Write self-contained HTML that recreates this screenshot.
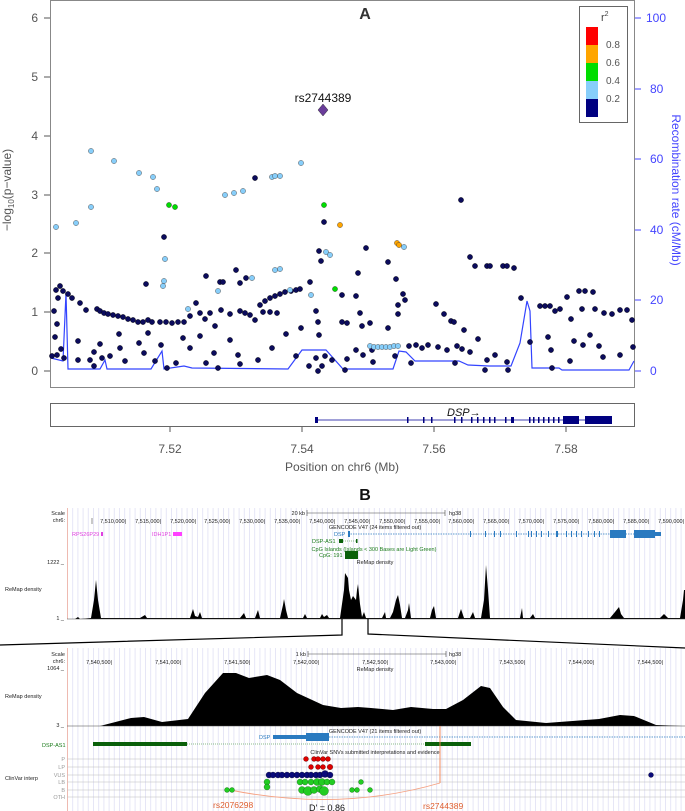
<!DOCTYPE html>
<html><head><meta charset="utf-8"><style>
html,body{margin:0;padding:0;background:#fff;}
svg{display:block;font-family:"Liberation Sans",sans-serif;}
</style></head><body>
<svg width="685" height="811" viewBox="0 0 685 811" xmlns="http://www.w3.org/2000/svg">
<defs>
<pattern id="grid" x="67" y="0" width="5.2" height="10" patternUnits="userSpaceOnUse">
<line x1="0.5" y1="0" x2="0.5" y2="10" stroke="#dcdcf2" stroke-width="0.7"/>
</pattern>
</defs>
<!-- PANEL A -->
<rect x="50.5" y="0.5" width="584" height="387" fill="none" stroke="#888" stroke-width="1"/>
<text x="365" y="19" font-size="16" font-weight="bold" fill="#333" text-anchor="middle">A</text>
<g font-size="12" fill="#555" text-anchor="end">
<text x="38" y="22">6</text><text x="38" y="81">5</text><text x="38" y="140">4</text>
<text x="38" y="199">3</text><text x="38" y="257">2</text><text x="38" y="316">1</text><text x="38" y="375">0</text>
</g>
<g stroke="#555" stroke-width="1">
<line x1="44" y1="18" x2="50" y2="18"/><line x1="44" y1="77" x2="50" y2="77"/><line x1="44" y1="136" x2="50" y2="136"/>
<line x1="44" y1="195" x2="50" y2="195"/><line x1="44" y1="253" x2="50" y2="253"/><line x1="44" y1="312" x2="50" y2="312"/><line x1="44" y1="371" x2="50" y2="371"/>
</g>
<text transform="translate(11,190) rotate(-90)" font-size="12" fill="#555" text-anchor="middle">−log<tspan font-size="8" dy="3">10</tspan><tspan dy="-3">(p−value)</tspan></text>
<g stroke="#4444ff" stroke-width="1">
<line x1="635" y1="18" x2="641" y2="18"/><line x1="635" y1="89" x2="641" y2="89"/><line x1="635" y1="159" x2="641" y2="159"/>
<line x1="635" y1="230" x2="641" y2="230"/><line x1="635" y1="300" x2="641" y2="300"/><line x1="635" y1="371" x2="641" y2="371"/>
</g>
<g font-size="12" fill="#4444ff">
<text x="646" y="22">100</text><text x="650" y="93">80</text><text x="650" y="163">60</text>
<text x="650" y="234">40</text><text x="650" y="304">20</text><text x="650" y="375">0</text>
</g>
<text transform="translate(672,190) rotate(90)" font-size="12" fill="#4444ff" text-anchor="middle">Recombination rate (cM/Mb)</text>
<!-- recombination line -->
<polyline fill="none" stroke="#3344ff" stroke-width="1.2" points="51,358 63,361 66,293 68,369 100,369 105,360 107,369 151,369 162,351 164,369 184,366 192,368 288,369 302,350 326,350 343,369 358,369 393,369 399,351 406,352 415,361 459,361 468,365 489,366 511,366 520,343 527,301 530,311 532,368 559,368 562,370 629,370 634,361"/>
<!-- navy points -->
<g fill="#0b0b5c" stroke="#000" stroke-width="0.4">
<circle cx="255" cy="178" r="2.6"/><circle cx="461" cy="200" r="2.6"/><circle cx="164" cy="237" r="2.6"/><circle cx="324" cy="222" r="2.6"/>
<circle cx="366" cy="248" r="2.6"/><circle cx="388" cy="262" r="2.6"/><circle cx="319" cy="251" r="2.6"/><circle cx="321" cy="261" r="2.6"/>
<circle cx="470" cy="257" r="2.6"/><circle cx="475" cy="266" r="2.6"/><circle cx="487" cy="266" r="2.6"/><circle cx="490" cy="266" r="2.6"/><circle cx="503" cy="266" r="2.6"/><circle cx="507" cy="266" r="2.6"/><circle cx="514" cy="268" r="2.6"/>
<circle cx="358" cy="273" r="2.6"/><circle cx="396" cy="279" r="2.6"/><circle cx="206" cy="276" r="2.6"/><circle cx="220" cy="282" r="2.6"/><circle cx="223" cy="282" r="2.6"/>
<circle cx="236" cy="270" r="2.6"/><circle cx="240" cy="283" r="2.6"/><circle cx="246" cy="278" r="2.6"/><circle cx="310" cy="282" r="2.6"/><circle cx="146" cy="284" r="2.6"/>
<circle cx="342" cy="295" r="2.6"/><circle cx="356" cy="296" r="2.6"/><circle cx="403" cy="294" r="2.6"/><circle cx="405" cy="300" r="2.6"/>
<circle cx="521" cy="298" r="2.6"/><circle cx="567" cy="297" r="2.6"/><circle cx="579" cy="291" r="2.6"/><circle cx="585" cy="291" r="2.6"/><circle cx="593" cy="292" r="2.6"/>
<circle cx="296" cy="290" r="2.6"/><circle cx="300" cy="289" r="2.6"/><circle cx="291" cy="291" r="2.6"/><circle cx="285" cy="292" r="2.6"/><circle cx="280" cy="294" r="2.6"/><circle cx="275" cy="296" r="2.6"/><circle cx="270" cy="298" r="2.6"/><circle cx="265" cy="301" r="2.6"/><circle cx="260" cy="305" r="2.6"/>
<circle cx="56" cy="290" r="2.6"/><circle cx="60" cy="286" r="2.6"/><circle cx="63" cy="291" r="2.6"/><circle cx="68" cy="294" r="2.6"/><circle cx="72" cy="298" r="2.6"/><circle cx="58" cy="298" r="2.6"/><circle cx="54" cy="311" r="2.6"/><circle cx="57" cy="324" r="2.6"/>
<circle cx="80" cy="303" r="2.6"/><circle cx="86" cy="310" r="2.6"/><circle cx="97" cy="309" r="2.6"/><circle cx="100" cy="311" r="2.6"/><circle cx="104" cy="313" r="2.6"/><circle cx="108" cy="314" r="2.6"/><circle cx="113" cy="315" r="2.6"/><circle cx="118" cy="316" r="2.6"/><circle cx="123" cy="317" r="2.6"/><circle cx="128" cy="319" r="2.6"/><circle cx="133" cy="320" r="2.6"/><circle cx="138" cy="322" r="2.6"/><circle cx="143" cy="322" r="2.6"/><circle cx="148" cy="320" r="2.6"/><circle cx="152" cy="322" r="2.6"/>
<circle cx="160" cy="322" r="2.6"/><circle cx="166" cy="322" r="2.6"/><circle cx="172" cy="323" r="2.6"/><circle cx="178" cy="322" r="2.6"/><circle cx="184" cy="322" r="2.6"/><circle cx="190" cy="316" r="2.6"/><circle cx="196" cy="303" r="2.6"/><circle cx="200" cy="313" r="2.6"/><circle cx="205" cy="319" r="2.6"/><circle cx="210" cy="313" r="2.6"/><circle cx="215" cy="326" r="2.6"/><circle cx="221" cy="310" r="2.6"/><circle cx="230" cy="314" r="2.6"/>
<circle cx="240" cy="311" r="2.6"/><circle cx="245" cy="313" r="2.6"/><circle cx="250" cy="315" r="2.6"/><circle cx="255" cy="320" r="2.6"/><circle cx="263" cy="312" r="2.6"/><circle cx="270" cy="312" r="2.6"/><circle cx="277" cy="313" r="2.6"/><circle cx="286" cy="334" r="2.6"/><circle cx="301" cy="328" r="2.6"/><circle cx="316" cy="311" r="2.6"/><circle cx="318" cy="322" r="2.6"/><circle cx="319" cy="335" r="2.6"/>
<circle cx="342" cy="322" r="2.6"/><circle cx="347" cy="323" r="2.6"/><circle cx="360" cy="313" r="2.6"/><circle cx="362" cy="326" r="2.6"/><circle cx="370" cy="323" r="2.6"/><circle cx="388" cy="328" r="2.6"/><circle cx="398" cy="314" r="2.6"/><circle cx="398" cy="305" r="2.6"/>
<circle cx="436" cy="304" r="2.6"/><circle cx="444" cy="314" r="2.6"/><circle cx="451" cy="321" r="2.6"/><circle cx="454" cy="322" r="2.6"/><circle cx="464" cy="330" r="2.6"/>
<circle cx="540" cy="306" r="2.6"/><circle cx="545" cy="306" r="2.6"/><circle cx="550" cy="306" r="2.6"/><circle cx="555" cy="311" r="2.6"/><circle cx="560" cy="309" r="2.6"/><circle cx="571" cy="319" r="2.6"/><circle cx="582" cy="309" r="2.6"/><circle cx="595" cy="309" r="2.6"/><circle cx="604" cy="313" r="2.6"/><circle cx="612" cy="314" r="2.6"/><circle cx="620" cy="310" r="2.6"/><circle cx="627" cy="310" r="2.6"/><circle cx="632" cy="320" r="2.6"/>
<circle cx="55" cy="337" r="2.6"/><circle cx="52" cy="356" r="2.6"/><circle cx="57" cy="355" r="2.6"/><circle cx="61" cy="349" r="2.6"/><circle cx="64" cy="358" r="2.6"/><circle cx="78" cy="341" r="2.6"/><circle cx="78" cy="360" r="2.6"/><circle cx="90" cy="360" r="2.6"/><circle cx="94" cy="352" r="2.6"/><circle cx="94" cy="366" r="2.6"/><circle cx="100" cy="344" r="2.6"/><circle cx="102" cy="358" r="2.6"/><circle cx="110" cy="356" r="2.6"/><circle cx="119" cy="334" r="2.6"/><circle cx="120" cy="348" r="2.6"/><circle cx="125" cy="361" r="2.6"/>
<circle cx="139" cy="343" r="2.6"/><circle cx="144" cy="353" r="2.6"/><circle cx="148" cy="333" r="2.6"/><circle cx="155" cy="361" r="2.6"/><circle cx="161" cy="345" r="2.6"/><circle cx="167" cy="368" r="2.6"/><circle cx="176" cy="363" r="2.6"/><circle cx="183" cy="338" r="2.6"/><circle cx="190" cy="348" r="2.6"/><circle cx="200" cy="336" r="2.6"/><circle cx="206" cy="363" r="2.6"/><circle cx="214" cy="353" r="2.6"/><circle cx="218" cy="368" r="2.6"/><circle cx="230" cy="340" r="2.6"/><circle cx="238" cy="355" r="2.6"/><circle cx="240" cy="364" r="2.6"/>
<circle cx="258" cy="360" r="2.6"/><circle cx="272" cy="348" r="2.6"/><circle cx="296" cy="356" r="2.6"/><circle cx="309" cy="366" r="2.6"/><circle cx="316" cy="358" r="2.6"/><circle cx="318" cy="371" r="2.6"/><circle cx="322" cy="366" r="2.6"/><circle cx="325" cy="356" r="2.6"/><circle cx="332" cy="360" r="2.6"/><circle cx="345" cy="370" r="2.6"/><circle cx="347" cy="359" r="2.6"/><circle cx="356" cy="350" r="2.6"/><circle cx="363" cy="355" r="2.6"/><circle cx="372" cy="350" r="2.6"/><circle cx="373" cy="362" r="2.6"/>
<circle cx="395" cy="356" r="2.6"/><circle cx="409" cy="346" r="2.6"/><circle cx="411" cy="363" r="2.6"/><circle cx="416" cy="345" r="2.6"/><circle cx="422" cy="348" r="2.6"/><circle cx="428" cy="345" r="2.6"/><circle cx="438" cy="347" r="2.6"/><circle cx="447" cy="350" r="2.6"/><circle cx="455" cy="363" r="2.6"/><circle cx="457" cy="346" r="2.6"/><circle cx="462" cy="349" r="2.6"/><circle cx="470" cy="352" r="2.6"/><circle cx="478" cy="339" r="2.6"/><circle cx="485" cy="370" r="2.6"/><circle cx="487" cy="360" r="2.6"/><circle cx="495" cy="355" r="2.6"/><circle cx="507" cy="362" r="2.6"/><circle cx="508" cy="370" r="2.6"/>
<circle cx="530" cy="342" r="2.6"/><circle cx="548" cy="337" r="2.6"/><circle cx="551" cy="350" r="2.6"/><circle cx="552" cy="368" r="2.6"/><circle cx="570" cy="361" r="2.6"/><circle cx="574" cy="341" r="2.6"/><circle cx="583" cy="345" r="2.6"/><circle cx="590" cy="335" r="2.6"/><circle cx="599" cy="346" r="2.6"/><circle cx="603" cy="357" r="2.6"/><circle cx="620" cy="355" r="2.6"/><circle cx="633" cy="347" r="2.6"/>
</g>
<!-- light blue -->
<g fill="#87cefa" stroke="#333" stroke-width="0.4">
<circle cx="91" cy="151" r="2.6"/><circle cx="114" cy="161" r="2.6"/><circle cx="139" cy="173" r="2.6"/><circle cx="153" cy="177" r="2.6"/><circle cx="157" cy="189" r="2.6"/><circle cx="91" cy="207" r="2.6"/><circle cx="56" cy="227" r="2.6"/><circle cx="76" cy="223" r="2.6"/><circle cx="165" cy="259" r="2.6"/><circle cx="164" cy="281" r="2.6"/><circle cx="163" cy="286" r="2.6"/>
<circle cx="225" cy="195" r="2.6"/><circle cx="234" cy="193" r="2.6"/><circle cx="243" cy="191" r="2.6"/><circle cx="272" cy="177" r="2.6"/><circle cx="275" cy="176" r="2.6"/><circle cx="280" cy="176" r="2.6"/><circle cx="301" cy="163" r="2.6"/><circle cx="218" cy="291" r="2.6"/><circle cx="252" cy="278" r="2.6"/><circle cx="275" cy="270" r="2.6"/><circle cx="280" cy="269" r="2.6"/><circle cx="290" cy="290" r="2.6"/><circle cx="311" cy="295" r="2.6"/><circle cx="188" cy="309" r="2.6"/><circle cx="326" cy="252" r="2.6"/><circle cx="330" cy="255" r="2.6"/><circle cx="404" cy="247" r="2.6"/>
<circle cx="370" cy="346" r="2.6"/><circle cx="374" cy="347" r="2.6"/><circle cx="378" cy="347" r="2.6"/><circle cx="382" cy="347" r="2.6"/><circle cx="386" cy="347" r="2.6"/><circle cx="390" cy="347" r="2.6"/><circle cx="394" cy="346" r="2.6"/><circle cx="398" cy="346" r="2.6"/>
</g>
<g fill="#00dd00" stroke="#333" stroke-width="0.4">
<circle cx="169" cy="205" r="2.6"/><circle cx="175" cy="207" r="2.6"/><circle cx="324" cy="205" r="2.6"/><circle cx="335" cy="289" r="2.6"/>
</g>
<g fill="#ffa500" stroke="#333" stroke-width="0.4">
<circle cx="340" cy="225" r="2.6"/><circle cx="397" cy="243" r="2.6"/><circle cx="399" cy="245" r="2.6"/>
</g>
<polygon points="323,104 328,110 323,116 318,110" fill="#6a3d9a" stroke="#333" stroke-width="0.5"/>
<text x="323" y="102" font-size="12" fill="#111" text-anchor="middle">rs2744389</text>
<!-- legend -->
<rect x="579.5" y="6.5" width="48" height="116" fill="#fff" stroke="#666"/>
<text x="601" y="21" font-size="11" fill="#444">r<tspan font-size="7" dy="-5">2</tspan></text>
<rect x="586" y="27" width="12" height="18" fill="#ff0000"/><rect x="586" y="45" width="12" height="18" fill="#ffa500"/>
<rect x="586" y="63" width="12" height="18" fill="#00dd00"/><rect x="586" y="81" width="12" height="18" fill="#87cefa"/>
<rect x="586" y="99" width="12" height="18" fill="#000080"/>
<g font-size="10" fill="#555"><text x="606" y="48">0.8</text><text x="606" y="66">0.6</text><text x="606" y="84">0.4</text><text x="606" y="102">0.2</text></g>
<!-- gene box -->
<rect x="50.5" y="403.5" width="584" height="23" fill="#fff" stroke="#666"/>
<text x="447" y="416" font-size="11" font-style="italic" fill="#111">DSP→</text>
<line x1="316" y1="420" x2="612" y2="420" stroke="#4040b0" stroke-width="1"/>
<g fill="#000080">
<rect x="315" y="417" width="3" height="6"/>
<rect x="407" y="417" width="1.5" height="6"/><rect x="423" y="417" width="1.5" height="6"/><rect x="431" y="417" width="1.5" height="6"/><rect x="454" y="417" width="1.5" height="6"/><rect x="461" y="417" width="1.5" height="6"/><rect x="471" y="417" width="1.5" height="6"/><rect x="477" y="417" width="1.5" height="6"/><rect x="483" y="417" width="1.5" height="6"/><rect x="489" y="417" width="1.5" height="6"/><rect x="494" y="417" width="1.5" height="6"/><rect x="505" y="417" width="1.5" height="6"/><rect x="511" y="417" width="3" height="6"/><rect x="529" y="417" width="1.5" height="6"/><rect x="533" y="417" width="1.5" height="6"/><rect x="538" y="417" width="1.5" height="6"/><rect x="543" y="417" width="1.5" height="6"/><rect x="548" y="417" width="1.5" height="6"/><rect x="553" y="417" width="1.5" height="6"/><rect x="558" y="417" width="1.5" height="6"/>
<rect x="563" y="416" width="16" height="8"/><rect x="585" y="416" width="27" height="8"/>
</g>
<g stroke="#555"><line x1="170" y1="427" x2="170" y2="432"/><line x1="302" y1="427" x2="302" y2="432"/><line x1="434" y1="427" x2="434" y2="432"/><line x1="566" y1="427" x2="566" y2="432"/></g>
<g font-size="12" fill="#555" text-anchor="middle"><text x="170" y="453">7.52</text><text x="302" y="453">7.54</text><text x="434" y="453">7.56</text><text x="566" y="453">7.58</text>
<text x="342" y="471">Position on chr6 (Mb)</text></g>

<!-- PANEL B -->
<text x="365" y="500" font-size="16" font-weight="bold" fill="#111" text-anchor="middle">B</text>
<rect x="67" y="508" width="618" height="111" fill="url(#grid)"/>
<rect x="67" y="648" width="618" height="163" fill="url(#grid)"/>
<line x1="67.5" y1="508" x2="67.5" y2="619" stroke="#f0b0a0" stroke-width="0.8"/>
<line x1="67.5" y1="648" x2="67.5" y2="811" stroke="#f0b0a0" stroke-width="0.8"/>
<g font-size="5.5" fill="#222">
<text x="65" y="515" text-anchor="end">Scale</text><text x="65" y="522" text-anchor="end">chr6:</text>
<line x1="307" y1="513" x2="445" y2="513" stroke="#444" stroke-width="0.6"/><line x1="307" y1="510" x2="307" y2="516" stroke="#444" stroke-width="0.6"/><line x1="445" y1="510" x2="445" y2="516" stroke="#444" stroke-width="0.6"/>
<text x="305" y="515" text-anchor="end">20 kb</text><text x="449" y="515">hg38</text>
<line x1="92" y1="518" x2="92" y2="524" stroke="#222" stroke-width="0.5"/>
<text x="126" y="523" text-anchor="end">7,510,000|</text><text x="161" y="523" text-anchor="end">7,515,000|</text><text x="196" y="523" text-anchor="end">7,520,000|</text><text x="230" y="523" text-anchor="end">7,525,000|</text><text x="265" y="523" text-anchor="end">7,530,000|</text><text x="300" y="523" text-anchor="end">7,535,000|</text><text x="335" y="523" text-anchor="end">7,540,000|</text><text x="370" y="523" text-anchor="end">7,545,000|</text><text x="405" y="523" text-anchor="end">7,550,000|</text><text x="440" y="523" text-anchor="end">7,555,000|</text><text x="474" y="523" text-anchor="end">7,560,000|</text><text x="509" y="523" text-anchor="end">7,565,000|</text><text x="544" y="523" text-anchor="end">7,570,000|</text><text x="579" y="523" text-anchor="end">7,575,000|</text><text x="614" y="523" text-anchor="end">7,580,000|</text><text x="649" y="523" text-anchor="end">7,585,000|</text><text x="684" y="523" text-anchor="end">7,590,000|</text>
<text x="375" y="529" text-anchor="middle">GENCODE V47 (24 items filtered out)</text>
<text x="72" y="536" fill="#e040e0">RPS26P29</text><rect x="101" y="532" width="2" height="4" fill="#e040e0"/>
<text x="152" y="536" fill="#e040e0">IDH1P1</text><rect x="173" y="532" width="9" height="4" fill="#ff40ff"/>
<text x="334" y="536" fill="#2a7ac0">DSP</text>
<line x1="348" y1="534" x2="660" y2="534" stroke="#2a7ac0" stroke-width="0.8" stroke-dasharray="1.5,1"/>
<g fill="#2a7ac0"><rect x="348" y="531" width="2" height="6"/><rect x="470" y="531" width="1" height="6"/><rect x="485" y="531" width="1" height="6"/><rect x="494" y="531" width="1" height="6"/><rect x="500" y="531" width="1" height="6"/><rect x="516" y="531" width="1" height="6"/><rect x="528" y="531" width="1" height="6"/><rect x="531" y="531" width="1" height="6"/><rect x="536" y="531" width="1" height="6"/><rect x="541" y="531" width="1" height="6"/><rect x="548" y="531" width="1" height="6"/><rect x="556" y="531" width="2" height="6"/><rect x="566" y="531" width="1" height="6"/><rect x="571" y="531" width="1" height="6"/><rect x="576" y="531" width="1" height="6"/><rect x="581" y="531" width="1" height="6"/><rect x="588" y="531" width="1" height="6"/><rect x="594" y="531" width="1" height="6"/><rect x="599" y="531" width="1" height="6"/><rect x="610" y="530" width="16" height="8"/><rect x="634" y="530" width="21" height="8"/><rect x="655" y="532" width="6" height="4"/></g>
<text x="312" y="543" fill="#1a7a1a">DSP-AS1</text><rect x="339" y="539" width="4" height="4" fill="#0a600a"/><line x1="343" y1="541" x2="357" y2="541" stroke="#1a7a1a" stroke-width="0.6" stroke-dasharray="1,1"/><rect x="356" y="539" width="1.5" height="4" fill="#0a600a"/>
<text x="374" y="551" text-anchor="middle" fill="#1a7a1a">CpG Islands (Islands &lt; 300 Bases are Light Green)</text>
<text x="319" y="557" fill="#1a7a1a">CpG: 191</text><rect x="345" y="551" width="13" height="8" fill="#0a600a"/>
<text x="375" y="564" text-anchor="middle">ReMap density</text>
<text x="64" y="564" text-anchor="end">1222 _</text><text x="64" y="620" text-anchor="end">1 _</text>
<text x="5" y="591">ReMap density</text>
</g>
<!-- top density -->
<path fill="#000" d="M67,619 L75,619 L78,617 L80,619 L91,618 L94,600 L96,580 L98,600 L101,618 L140,618 L145,615 L147,618 L190,618 L193,609 L195,616 L198,617 L200,612 L202,618 L240,618 L244,613 L246,618 L255,618 L258,610 L260,618 L280,618 L283,605 L284,599 L286,610 L288,618 L303,618 L305,614 L307,618 L320,618 L322,614 L324,617 L327,615 L329,618 L340,618 L342,604 L344,590 L345,573 L348,578 L349,590 L351,600 L353,596 L356,600 L357,590 L358,584 L360,604 L362,617 L364,612 L366,618 L382,618 L385,612 L386,618 L390,618 L393,612 L396,600 L398,595 L400,605 L402,618 L405,618 L408,610 L409,603 L411,618 L430,618 L432,610 L434,606 L436,618 L458,618 L461,609 L464,618 L470,618 L473,612 L475,618 L481,618 L484,600 L486,565 L488,590 L490,618 L520,618 L522,608 L523,618 L530,618 L533,614 L535,618 L610,618 L615,612 L619,607 L621,614 L624,618 L660,618 L664,614 L668,618 L680,618 L683,600 L684,590 L685,590 L685,619 Z"/>
<line x1="67" y1="619" x2="685" y2="619" stroke="#444" stroke-width="0.6"/>
<!-- zoom lines -->
<polyline points="342,619 342,635 0,645" fill="none" stroke="#000" stroke-width="1.2"/>
<polyline points="368,619 368,634 685,648" fill="none" stroke="#000" stroke-width="1.2"/>
<!-- lower -->
<g font-size="5.5" fill="#222">
<text x="65" y="656" text-anchor="end">Scale</text><text x="65" y="663" text-anchor="end">chr6:</text>
<line x1="308" y1="654" x2="446" y2="654" stroke="#444" stroke-width="0.6"/><line x1="308" y1="651" x2="308" y2="657" stroke="#444" stroke-width="0.6"/><line x1="446" y1="651" x2="446" y2="657" stroke="#444" stroke-width="0.6"/>
<text x="306" y="656" text-anchor="end">1 kb</text><text x="449" y="656">hg38</text>
<text x="112" y="664" text-anchor="end">7,540,500|</text><text x="181" y="664" text-anchor="end">7,541,000|</text><text x="250" y="664" text-anchor="end">7,541,500|</text><text x="319" y="664" text-anchor="end">7,542,000|</text><text x="388" y="664" text-anchor="end">7,542,500|</text><text x="456" y="664" text-anchor="end">7,543,000|</text><text x="525" y="664" text-anchor="end">7,543,500|</text><text x="594" y="664" text-anchor="end">7,544,000|</text><text x="663" y="664" text-anchor="end">7,544,500|</text>
<text x="375" y="671" text-anchor="middle">ReMap density</text>
<text x="64" y="670" text-anchor="end">1064 _</text><text x="64" y="727" text-anchor="end">3 _</text>
<text x="5" y="698">ReMap density</text>
</g>
<path fill="#000" d="M100,726 L131,718 L144,717 L162,722 L188,719 L205,693 L223,673 L236,673 L249,678 L267,675 L280,680 L297,693 L323,705 L341,708 L358,707 L371,708 L393,710 L411,707 L433,709 L446,709 L463,700 L481,686 L490,688 L503,707 L516,720 L546,723 L599,719 L620,715 L634,716 L656,725 L682,726 Z"/>
<line x1="67" y1="726" x2="685" y2="726" stroke="#444" stroke-width="0.6"/>
<g font-size="5.5" fill="#222">
<text x="375" y="733" text-anchor="middle">GENCODE V47 (21 items filtered out)</text>
<text x="259" y="739" fill="#2a7ac0">DSP</text>
<rect x="273" y="735" width="33" height="4" fill="#2a7ac0"/><rect x="306" y="733" width="23" height="8" fill="#2a7ac0"/>
<line x1="329" y1="737" x2="685" y2="737" stroke="#2a7ac0" stroke-width="0.7" stroke-dasharray="1.5,1"/>
<text x="42" y="747" fill="#1a7a1a">DSP-AS1</text>
<rect x="93" y="742" width="94" height="4" fill="#0a600a"/><line x1="187" y1="744" x2="425" y2="744" stroke="#1a7a1a" stroke-width="0.6" stroke-dasharray="1,1"/><rect x="425" y="742" width="46" height="4" fill="#0a600a"/>
<text x="375" y="754" text-anchor="middle">ClinVar SNVs submitted interpretations and evidence</text>
<g fill="#999" text-anchor="end"><text x="65" y="761">P</text><text x="65" y="769">LP</text><text x="65" y="777">VUS</text><text x="65" y="784">LB</text><text x="65" y="792">B</text><text x="65" y="799">OTH</text></g>
<text x="5" y="780">ClinVar interp</text>
</g>
<g stroke="#bbb" stroke-width="0.6"><line x1="67" y1="759" x2="685" y2="759"/><line x1="67" y1="767" x2="685" y2="767"/><line x1="67" y1="775" x2="685" y2="775"/><line x1="67" y1="782" x2="685" y2="782"/><line x1="67" y1="790" x2="685" y2="790"/><line x1="67" y1="797" x2="685" y2="797"/></g>
<line x1="440" y1="726" x2="440" y2="783" stroke="#f08050" stroke-width="0.9"/>
<path d="M440,783 Q340,812 230,790" fill="none" stroke="#f5a080" stroke-width="0.9"/>
<g stroke="#300" stroke-width="0.3" fill="#dd0000">
<circle cx="306" cy="759" r="2.5"/><circle cx="314" cy="759" r="2.5"/><circle cx="318" cy="759" r="2.5"/><circle cx="323" cy="759" r="2.5"/><circle cx="328" cy="759" r="2.5"/>
<circle cx="311" cy="767" r="2.5"/><circle cx="318" cy="767" r="2.5"/><circle cx="323" cy="767" r="2.5"/><circle cx="330" cy="767" r="2.8"/>
</g>
<g stroke="#001" stroke-width="0.3" fill="#0a0a7a">
<circle cx="269" cy="775" r="3"/><circle cx="273" cy="775" r="3"/><circle cx="278" cy="775" r="3"/><circle cx="282" cy="775" r="3"/><circle cx="287" cy="775" r="3"/><circle cx="292" cy="775" r="3"/><circle cx="297" cy="775" r="3"/><circle cx="302" cy="775" r="3"/><circle cx="307" cy="775" r="3"/><circle cx="311" cy="775" r="3"/><circle cx="316" cy="775" r="3"/><circle cx="320" cy="775" r="3"/><circle cx="325" cy="774" r="3.5"/><circle cx="330" cy="775" r="3"/><circle cx="651" cy="775" r="2.5"/>
</g>
<g stroke="#040" stroke-width="0.3" fill="#22cc22">
<circle cx="267" cy="782" r="3"/><circle cx="267" cy="787" r="3"/><circle cx="300" cy="782" r="3"/><circle cx="305" cy="782" r="3"/><circle cx="311" cy="782" r="3"/><circle cx="317" cy="782" r="3.5"/><circle cx="322" cy="782" r="3.5"/><circle cx="327" cy="782" r="3"/><circle cx="332" cy="782" r="3"/><circle cx="361" cy="782" r="2.5"/>
<circle cx="227" cy="790" r="2.5"/><circle cx="232" cy="790" r="2.5"/><circle cx="302" cy="790" r="3.5"/><circle cx="308" cy="791" r="4.5"/><circle cx="314" cy="790" r="3.5"/><circle cx="320" cy="789" r="3.5"/><circle cx="324" cy="791" r="4.5"/><circle cx="352" cy="790" r="2.5"/><circle cx="357" cy="790" r="2.5"/><circle cx="370" cy="790" r="2.5"/>
</g>
<g font-size="8.5" fill="#e06030"><text x="213" y="808">rs2076298</text><text x="423" y="809">rs2744389</text></g>
<text x="309" y="811" font-size="9" fill="#111">D' = 0.86</text>
</svg>
</body></html>
